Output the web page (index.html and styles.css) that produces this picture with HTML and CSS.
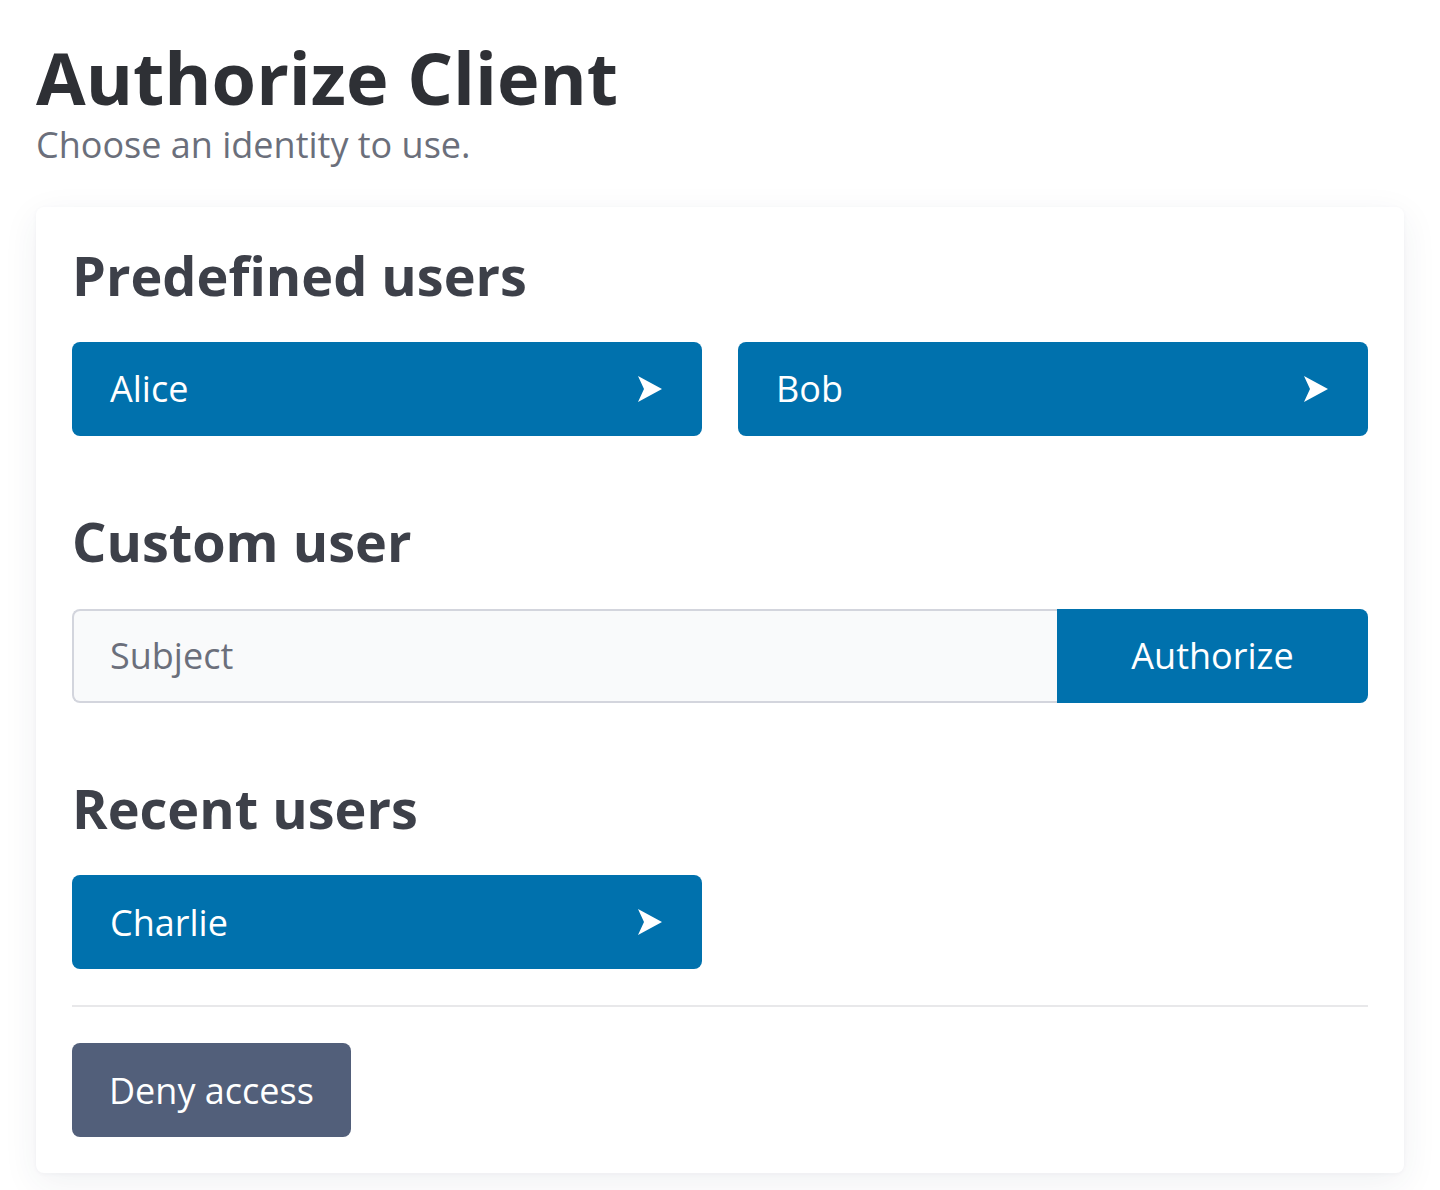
FILE: index.html
```html
<!DOCTYPE html>
<html lang="en">
<head>
  <meta charset="UTF-8" />
  <title>Authorize Client</title>
  <link rel="stylesheet" href="styles.css">
</head>
<body>
  <div class="page">
    <h1>Authorize Client</h1>
    <p class="subtitle">Choose an identity to use.</p>

    <div class="card">
      <!-- Predefined -->
      <h2>Predefined users</h2>
      <div class="user-grid">
        <button class="user-btn">
          <span>Alice</span>
          <svg class="arrow" viewBox="0 0 24 26"><path d="M0 0 L24 13 L0 26 L6 13 Z" fill="#fff"/></svg>
        </button>
        <button class="user-btn">
          <span>Bob</span>
          <svg class="arrow" viewBox="0 0 24 26"><path d="M0 0 L24 13 L0 26 L6 13 Z" fill="#fff"/></svg>
        </button>
      </div>

      <!-- Custom -->
      <h2 class="section">Custom user</h2>
      <div class="custom-row">
        <input type="text" placeholder="Subject" />
        <button class="authorize-btn">Authorize</button>
      </div>

      <!-- Recent -->
      <h2 class="section">Recent users</h2>
      <div class="user-grid">
        <button class="user-btn">
          <span>Charlie</span>
          <svg class="arrow" viewBox="0 0 24 26"><path d="M0 0 L24 13 L0 26 L6 13 Z" fill="#fff"/></svg>
        </button>
      </div>

      <hr class="divider" />
      <button class="deny-btn">Deny access</button>
    </div>
  </div>
</body>
</html>
```

FILE: styles.css
```css
body {
  margin: 0;
  font-family: 'Open Sans', 'Noto Sans', sans-serif;
  background: #fff;
  color: #2e3035;
}

.page {
  padding: 38px 36px 36px;
}

h1 {
  margin: 0;
  font-size: 72px;
  line-height: 1.1;
  font-weight: 700;
  color: #2e3035;
}

.subtitle {
  margin: 5px 0 38px;
  font-size: 36px;
  line-height: 1.3;
  color: #6b6f7b;
}

/* Card */
.card {
  background: #fff;
  border-radius: 8px;
  padding: 36px;
  box-shadow: 0 10px 36px rgba(40, 50, 90, 0.07), 0 1px 4px rgba(40, 50, 90, 0.04);
}

.card h2 {
  margin: 0 0 34px;
  font-size: 54px;
  line-height: 1.2;
  font-weight: 700;
  color: #3d4049;
}
.card h2.section {
  margin: 73px 0 35px;
}

.user-grid {
  display: grid;
  grid-template-columns: 1fr 1fr;
  gap: 36px;
}

.user-btn {
  display: flex;
  align-items: center;
  justify-content: space-between;
  height: 94px;
  padding: 0 40px 0 38px;
  border: none;
  border-radius: 8px;
  background: #0071ad;
  color: #fff;
  font-family: inherit;
  font-size: 36px;
  text-align: left;
  cursor: pointer;
}
.user-btn .arrow {
  width: 24px;
  height: 26px;
}

/* Custom user row */
.custom-row {
  display: flex;
  height: 94px;
}
.custom-row input {
  flex: 1;
  box-sizing: border-box;
  height: 94px;
  padding: 0 36px;
  border: 2px solid #d3d5dd;
  border-right: none;
  border-radius: 8px 0 0 8px;
  background: #f9fafb;
  font-family: inherit;
  font-size: 36px;
  color: #2e3035;
  outline: none;
}
.custom-row input::placeholder {
  color: #6b6f7b;
}
.authorize-btn {
  width: 311px;
  border: none;
  border-radius: 0 8px 8px 0;
  background: #0071ad;
  color: #fff;
  font-family: inherit;
  font-size: 36px;
  cursor: pointer;
}

.divider {
  margin: 36px 0;
  border: none;
  border-top: 2px solid #e8e8ea;
}

.deny-btn {
  height: 94px;
  padding: 0 37px;
  border: none;
  border-radius: 8px;
  background: #525f7a;
  color: #fff;
  font-family: inherit;
  font-size: 36px;
  cursor: pointer;
}
```
